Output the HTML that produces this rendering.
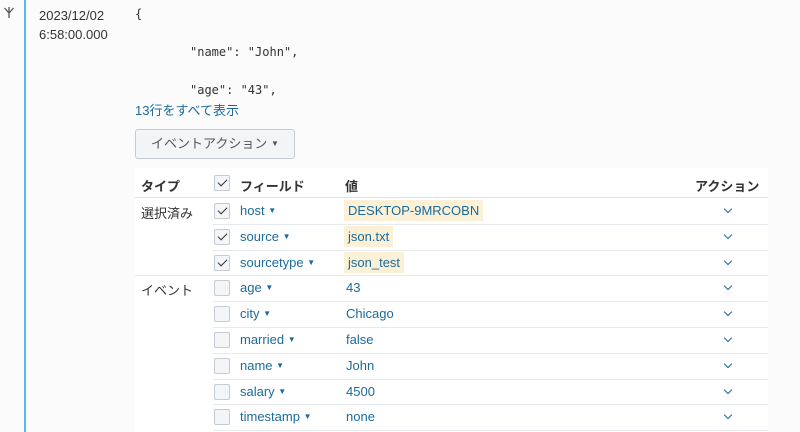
<!DOCTYPE html>
<html><head><meta charset="utf-8"><style>
body{margin:0;width:800px;height:432px;overflow:hidden;background:#fbfbfc;font-family:"Liberation Sans","Noto Sans CJK JP",sans-serif;position:relative;color:#333}
.a{position:absolute;white-space:nowrap}
.mono{font-family:"DejaVu Sans Mono","Liberation Mono",monospace;font-size:12px;color:#333}
.link{color:#1a6b9b}
.cb{position:absolute;left:214px;width:16px;height:16px;border:1px solid #c3cbd4;border-radius:2px;background:#f4f5f7;box-sizing:border-box}
.cb.on::after{content:"";position:absolute;left:5px;top:1px;width:4px;height:8px;border:solid #333;border-width:0 1.2px 1.2px 0;transform:rotate(45deg)}
.line{position:absolute;height:1px;background:#e6e9ed}
.hl{background:#fcf0d6;padding:3px 4px}
.chev{position:absolute;left:725px;width:5px;height:5px;border:solid #1a6b9b;border-width:0 1.5px 1.5px 0;transform:rotate(45deg)}
.ar{font-size:8px;vertical-align:2px}
</style></head><body>
<div class="a" style="left:24px;top:0;width:2px;height:432px;background:#5cb8ec"></div>
<svg class="a" style="left:3px;top:5px" width="12" height="14"><path d="M6 2V13M1.5 3L6 8L10.5 3" fill="none" stroke="#555" stroke-width="1.3"/></svg>
<div class="a" style="left:39px;top:6px;font-size:13px;line-height:19px;color:#333">2023/12/02<br>6:58:00.000</div>
<div class="a mono" style="left:135px;top:7px">{</div>
<div class="a mono" style="left:190px;top:45px">"name": "John",</div>
<div class="a mono" style="left:190px;top:83px">"age": "43",</div>
<div class="a link" style="left:135px;top:100px;font-size:13px">13行をすべて表示</div>
<div class="a" style="left:135px;top:129px;width:160px;height:30px;border:1px solid #c3cbd4;border-radius:3px;background:#f3f4f6;box-sizing:border-box;font-size:13px;color:#555;line-height:28px;text-align:center">イベントアクション <span class="ar">▼</span></div>
<div class="a" style="left:135px;top:168px;width:633px;height:264px;background:#fff"></div>
<div class="a" style="left:141px;top:176px;font-size:13px;font-weight:bold">タイプ</div>
<div class="cb on" style="top:175px"></div>
<div class="a" style="left:240px;top:176px;font-size:13px;font-weight:bold">フィールド</div>
<div class="a" style="left:345px;top:176px;font-size:13px;font-weight:bold">値</div>
<div class="a" style="left:695px;top:176px;font-size:13px;font-weight:bold">アクション</div>
<div class="line" style="left:135px;top:197px;width:633px;background:#dde1e6"></div>
<div class="a" style="left:141px;top:203px;font-size:13px">選択済み</div>
<div class="a" style="left:141px;top:280px;font-size:13px">イベント</div>
<div id="rows"></div>
<script>
var r=[["host","DESKTOP-9MRCOBN",1,1],["source","json.txt",1,1],["sourcetype","json_test",1,1],["age","43",0,0],["city","Chicago",0,0],["married","false",0,0],["name","John",0,0],["salary","4500",0,0],["timestamp","none",0,0]];
var h="";for(var i=0;i<r.length;i++){var y=198+i*25.8;var c=y+13;
h+='<div class="cb'+(r[i][2]?' on':'')+'" style="top:'+(c-8)+'px"></div>';
h+='<div class="a link" style="left:240px;top:'+(c-8)+'px;font-size:13px">'+r[i][0]+' <span class="ar">▼</span></div>';
h+='<div class="a link" style="left:'+(r[i][3]?344:346)+'px;top:'+(c-8)+'px;font-size:13px">'+(r[i][3]?'<span class="hl">'+r[i][1]+'</span>':r[i][1])+'</div>';
h+='<div class="chev" style="top:'+(c-5)+'px"></div>';
var L=(i==2)?135:213;h+='<div class="line" style="left:'+L+'px;top:'+Math.round(y+25.8)+'px;width:'+(768-L)+'px"></div>';}
document.getElementById("rows").innerHTML=h;
</script>
</body></html>
